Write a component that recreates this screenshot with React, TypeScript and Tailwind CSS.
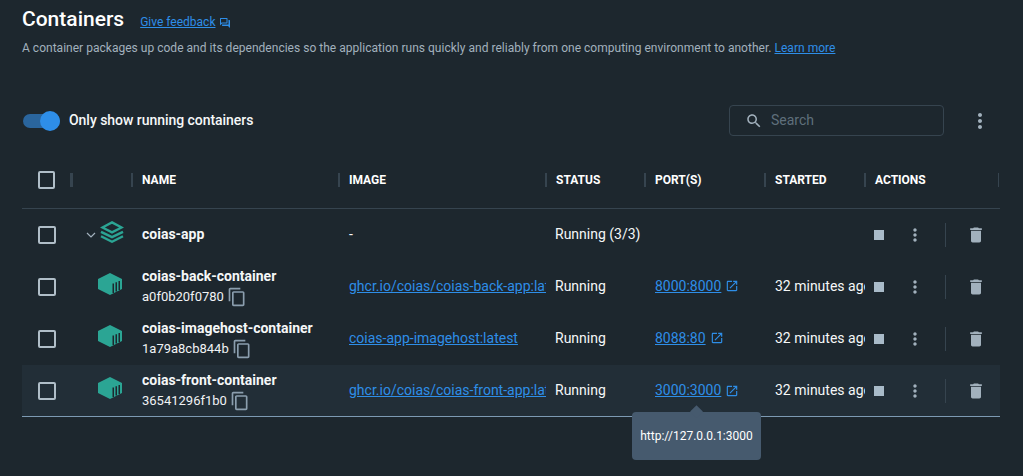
import React from "react";

const P = {
  copy: "M16 1H4c-1.1 0-2 .9-2 2v14h2V3h12V1zm3 4H8c-1.1 0-2 .9-2 2v14c0 1.1.9 2 2 2h11c1.1 0 2-.9 2-2V7c0-1.1-.9-2-2-2zm0 16H8V7h11v14z",
  trash: "M6 19c0 1.1.9 2 2 2h8c1.1 0 2-.9 2-2V7H6v12zM19 4h-3.5l-1-1h-5l-1 1H5v2h14V4z",
  open: "M19 19H5V5h7V3H5c-1.11 0-2 .9-2 2v14c0 1.1.89 2 2 2h14c1.1 0 2-.9 2-2v-7h-2v7zM14 3v2h3.59l-9.83 9.83 1.41 1.41L19 6.41V10h2V3h-7z",
  more: "M12 8c1.1 0 2-.9 2-2s-.9-2-2-2-2 .9-2 2 .9 2 2 2zm0 2c-1.1 0-2 .9-2 2s.9 2 2 2 2-.9 2-2-.9-2-2-2zm0 6c-1.1 0-2 .9-2 2s.9 2 2 2 2-.9 2-2-.9-2-2-2z",
  search: "M15.5 14h-.79l-.28-.27C15.41 12.59 16 11.11 16 9.5 16 5.91 13.09 3 9.5 3S3 5.91 3 9.5 5.91 16 9.5 16c1.61 0 3.09-.59 4.23-1.57l.27.28v.79l5 4.99L20.49 19l-4.99-5zm-6 0C7.01 14 5 11.99 5 9.5S7.01 5 9.5 5 14 7.01 14 9.5 11.99 14 9.5 14z",
  forum: "M15 4v7H5.17L4 12.17V4h11m1-2H3c-.55 0-1 .45-1 1v14l4-4h10c.55 0 1-.45 1-1V3c0-.55-.45-1-1-1zm5 4h-2v9H6v2c0 .55.45 1 1 1h11l4 4V7c0-.55-.45-1-1-1z",
};

function Ic({ d, className }: { d: string; className: string }) {
  return (
    <svg viewBox="0 0 24 24" fill="currentColor" className={className}>
      <path d={d} />
    </svg>
  );
}

function Check() {
  return <div className="h-[18px] w-[18px] rounded-[2px] border-2 border-[#b0bec8]" />;
}

function Stack() {
  return (
    <svg viewBox="0 0 24 22" className="mb-[6px] h-[22px] w-[24px]" fill="none" stroke="#2ba594" strokeWidth="2.4">
      <path d="M12 1.4 21.6 6.5 12 11.4 2.4 6.5Z" />
      <path d="M1 10.8 12 16.2 23 10.8" />
      <path d="M1 15.2 12 20.7 23 15.2" />
    </svg>
  );
}

function Box() {
  return (
    <svg viewBox="0 0 24 22" className="mb-[6px] h-[22px] w-[24px]">
      <path d="M12 0 24 6V16L12 22 0 16V6Z" fill="#2ba594" />
      <path d="M14.5 10.5h1.5V20h-1.5ZM17.5 9.2h1.5V18.5h-1.5ZM20.5 8h1.5V17h-1.5Z" fill="#1d272e" />
    </svg>
  );
}

function Head({ label }: { label?: string }) {
  return (
    <div className="ml-[-1px] flex h-[20px] items-center">
      <div className="h-[14px] w-[2px] bg-[#36444f]" />
      {label && <span className="pl-[9px] text-[12px] font-bold text-white">{label}</span>}
    </div>
  );
}

function Actions() {
  return (
    <div className="flex h-full items-center">
      <div className="ml-[9px] h-[10px] w-[10px] bg-[#a9bbc9]" />
      <Ic d={P.more} className="ml-[21px] h-[20px] w-[20px] text-[#a2b1bd]" />
      <div className="ml-[20px] h-[24px] w-px bg-[#36444f]" />
      <Ic d={P.trash} className="ml-[20px] h-[20px] w-[20px] text-[#a2b1bd]" />
    </div>
  );
}

const grid = "grid grid-cols-[50px_60px_207px_207px_99px_120px_100px_135px] items-center";

function Row({
  name, id, image, port, hover, tip,
}: { name: string; id: string; image: string; port: string; hover?: boolean; tip?: boolean }) {
  const lift = hover ? "" : "pb-[2px]";
  return (
    <div className={`${grid} relative h-[52px] ${hover ? "border-b border-[#7d9ab3] bg-[#222e37]" : ""}`}>
      <div className="pl-[16px]"><Check /></div>
      <div className="flex justify-end pr-[10px]"><Box /></div>
      <div className="pb-[1px] pl-[10px] leading-[20px]">
        <div className="mb-[1px] text-[14px] font-bold text-[#f5f7f8]">{name}</div>
        <div className="flex items-center text-[13px] text-[#f0f2f4]">
          {id}
          <Ic d={P.copy} className="ml-[3px] h-[20px] w-[20px] text-[#8b9eae]" />
        </div>
      </div>
      <div className={`overflow-hidden whitespace-nowrap pl-[10px] pr-[2px] text-[14px] text-[#2e8ee8] underline ${lift}`}>{image}</div>
      <div className={`pl-[9px] text-[14px] text-[#f5f7f8] ${lift}`}>Running</div>
      <div className={`flex items-center pl-[10px] text-[14px] text-[#2e8ee8] ${lift}`}>
        <span className="underline">{port}</span>
        <Ic d={P.open} className="ml-[4px] h-[14px] w-[14px]" />
      </div>
      <div className={`overflow-hidden whitespace-nowrap pl-[10px] text-[14px] text-[#f5f7f8] ${lift}`}>32 minutes ago</div>
      <Actions />
      {tip && (
        <div className="absolute left-[610px] top-[47px] z-10 flex h-[48px] w-[129px] items-center justify-center rounded-[4px] bg-[#465a6e] text-[12px] text-white">
          <div className="absolute left-[60px] top-[-5px] h-[9px] w-[9px] rotate-45 bg-[#465a6e]" />
          <span className="relative">http://127.0.0.1:3000</span>
        </div>
      )}
    </div>
  );
}

export default function App() {
  return (
    <div className="h-[476px] w-[1023px] overflow-hidden bg-[#1d272e] pl-[22px] font-['Roboto',sans-serif]">
      <div className="flex h-[40px] items-center">
        <h1 className="text-[21px] font-medium text-white">Containers</h1>
        <a className="ml-[16px] mt-[3px] text-[12px] text-[#2e8ee8] underline">Give feedback</a>
        <Ic d={P.forum} className="ml-[4px] mt-[5px] h-[12px] w-[12px] text-[#2e8ee8]" />
      </div>
      <p className="h-[16px] text-[12px] leading-[16px] tracking-[0.02px] text-[#a2b1bd]">
        A container packages up code and its dependencies so the application runs quickly and reliably from one computing environment to another.{" "}
        <a className="text-[#2e8ee8] underline">Learn more</a>
      </p>
      <div className="mt-[49px] flex h-[31px] items-center">
        <div className="relative ml-[1px] h-[14px] w-[37px] rounded-full bg-[#2a659d]">
          <div className="absolute left-[17px] top-[-3px] h-[20px] w-[20px] rounded-full bg-[#2e8ee8]" />
        </div>
        <span className="ml-[9px] w-[184px] whitespace-nowrap text-[14px] font-medium tracking-[-0.04px] text-[#f5f7f8]">Only show running containers</span>
        <div className="ml-[476px] flex h-[31px] w-[215px] items-center rounded-[4px] border border-[#36444f] pl-[15px]">
          <Ic d={P.search} className="h-[18px] w-[18px] text-[#a2b1bd]" />
          <span className="ml-[8px] text-[14px] text-[#5f6f7b]">Search</span>
        </div>
        <Ic d={P.more} className="ml-[24px] h-[24px] w-[24px] text-[#a2b1bd]" />
      </div>
      <div className="mt-[16px] w-[978px]">
        <div className={`${grid} h-[57px] border-b border-[#36444f]`}>
          <div className="flex items-center pl-[16px]">
            <Check />
            <div className="ml-[15px] h-[14px] w-[2px] bg-[#36444f]" />
          </div>
          <Head />
          <Head label="NAME" />
          <Head label="IMAGE" />
          <Head label="STATUS" />
          <Head label="PORT(S)" />
          <Head label="STARTED" />
          <div className="flex items-center justify-between">
            <Head label="ACTIONS" />
            <div className="mr-[1px] h-[14px] w-px bg-[#36444f]" />
          </div>
        </div>
        <div className={`${grid} h-[52px]`}>
          <div className="pl-[16px]"><Check /></div>
          <div className="flex items-center justify-end pr-[8px]">
            <svg viewBox="0 0 12 12" className="mr-[3px] h-[12px] w-[12px]" fill="none" stroke="#a2b1bd" strokeWidth="1.2"><path d="M2 4 6 8 10 4" /></svg>
            <Stack />
          </div>
          <div className="pb-[2px] pl-[10px] text-[14px] font-bold text-[#f5f7f8]">coias-app</div>
          <div className="pb-[2px] pl-[10px] text-[14px] text-[#f5f7f8]">-</div>
          <div className="col-span-2 pb-[2px] pl-[9px] text-[14px] text-[#f5f7f8]">Running (3/3)</div>
          <div />
          <Actions />
        </div>
        <Row name="coias-back-container" id="a0f0b20f0780" image="ghcr.io/coias/coias-back-app:latest" port="8000:8000" />
        <Row name="coias-imagehost-container" id="1a79a8cb844b" image="coias-app-imagehost:latest" port="8088:80" />
        <Row name="coias-front-container" id="36541296f1b0" image="ghcr.io/coias/coias-front-app:latest" port="3000:3000" hover tip />
      </div>
    </div>
  );
}
